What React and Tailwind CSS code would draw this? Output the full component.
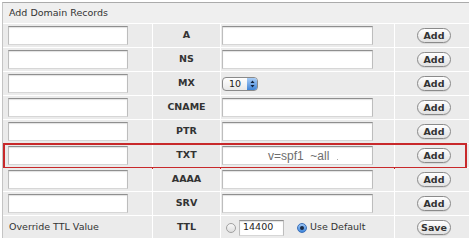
import React from "react";

const rows = [
  { type: "A" },
  { type: "NS" },
  { type: "MX", select: true },
  { type: "CNAME" },
  { type: "PTR" },
  { type: "TXT", value: "v=spf1  ~all", boxed: true },
  { type: "AAAA" },
  { type: "SRV" },
];

function TextBox({ className = "", children }) {
  return (
    <div
      className={
        "bg-white border border-t-[#8f8f8f] border-x-[#bdbdbd] border-b-[#d6d6d6] shadow-[inset_0_1px_1px_rgba(0,0,0,0.12)] " +
        className
      }
    >
      {children}
    </div>
  );
}

function PillButton({ label }) {
  return (
    <button className="w-[34px] h-[15px] rounded-full border border-[#8a8a8a] bg-gradient-to-b from-white to-[#e2e2e2] text-[9.5px] font-bold leading-none text-[#333] shadow-[0_1px_0_rgba(0,0,0,0.08)]">
      {label}
    </button>
  );
}

function Radio({ checked }) {
  if (checked) {
    return (
      <span className="w-[10px] h-[10px] rounded-full border border-[#3b6fb8] bg-gradient-to-b from-[#9cc6f5] to-[#3d86dc] flex items-center justify-center">
        <span className="w-[4px] h-[4px] rounded-full bg-[#1a2a44]" />
      </span>
    );
  }
  return <span className="w-[10px] h-[10px] rounded-full border border-[#a0a0a0] bg-gradient-to-b from-[#f8f8f8] to-[#dedede]" />;
}

function MxSelect() {
  return (
    <div className="w-[36px] h-[14px] rounded-[4px] border border-[#8a8a8a] bg-gradient-to-b from-white to-[#e8e8e8] flex overflow-hidden">
      <span className="flex-1 pl-[6px] text-[9.5px] leading-[12px] text-[#222]">10</span>
      <span className="w-[10px] bg-gradient-to-b from-[#a9cdf6] to-[#3f84d6] flex items-center justify-center">
        <svg width="5" height="8" viewBox="0 0 5 8">
          <path d="M2.5 0.5 L4.5 3 L0.5 3 Z" fill="#10203a" />
          <path d="M2.5 7.5 L4.5 5 L0.5 5 Z" fill="#10203a" />
        </svg>
      </span>
    </div>
  );
}

export default function App() {
  return (
    <div className="w-[474px] h-[238px] overflow-hidden bg-white pt-[2px] pl-[2px] font-['DejaVu_Sans',sans-serif] text-[#222]">
      <div className="w-[467px] border-l border-t border-l-[#c4c4c4] border-t-[#ababab] flex flex-col gap-px bg-white">
        <div className="h-[20px] bg-[#efefef] pl-[6px] flex items-center text-[9.5px] text-[#333]">Add Domain Records</div>

        {rows.map((r) => (
          <div key={r.type} className="relative flex gap-px h-[23px]">
            <div className="w-[149px] bg-[#ebebeb] pl-[5px] flex items-center">
              <TextBox className="w-[120px] h-[19px]" />
            </div>
            <div className="w-[67px] bg-[#e9e9e9] flex items-center justify-center text-[9.5px] font-bold text-[#333]">
              {r.type}
            </div>
            <div className="w-[173px] bg-[#ebebeb] pl-[1px] flex items-center">
              {r.select ? (
                <MxSelect />
              ) : (
                <TextBox className="w-[151px] h-[19px] flex items-center">
                  {r.value && (
                    <>
                      <span className="pl-[45px] whitespace-pre font-['Liberation_Sans',sans-serif] text-[12px] text-[#6e6e6e]">
                        {r.value}
                      </span>
                      <span className="ml-[8px] mt-[8px] w-[1px] h-[1px] bg-[#aaa]" />
                    </>
                  )}
                </TextBox>
              )}
            </div>
            <div className="w-[74px] bg-[#ebebeb] flex items-center justify-center pl-[4px]">
              <PillButton label="Add" />
            </div>
            {r.boxed && (
              <span className="absolute -top-[1px] -bottom-[2px] left-0 right-[2px] border-2 border-[#c8292b] pointer-events-none" />
            )}
          </div>
        ))}

        <div className="flex gap-px h-[23px]">
          <div className="w-[149px] bg-[#ebebeb] pl-[6px] flex items-center text-[9.5px] text-[#333]">Override TTL Value</div>
          <div className="w-[67px] bg-[#e9e9e9] flex items-center justify-center text-[9.5px] font-bold text-[#333]">TTL</div>
          <div className="w-[173px] bg-[#ebebeb] pl-[5px] flex items-center">
            <Radio />
            <TextBox className="ml-[3px] w-[45px] h-[16px] flex items-center pl-[3px] text-[9.5px]">14400</TextBox>
            <span className="ml-[13px]">
              <Radio checked />
            </span>
            <span className="ml-[3px] text-[9.5px] text-[#333]">Use Default</span>
          </div>
          <div className="w-[74px] bg-[#ebebeb] flex items-center justify-center pl-[4px]">
            <PillButton label="Save" />
          </div>
        </div>
      </div>
    </div>
  );
}
